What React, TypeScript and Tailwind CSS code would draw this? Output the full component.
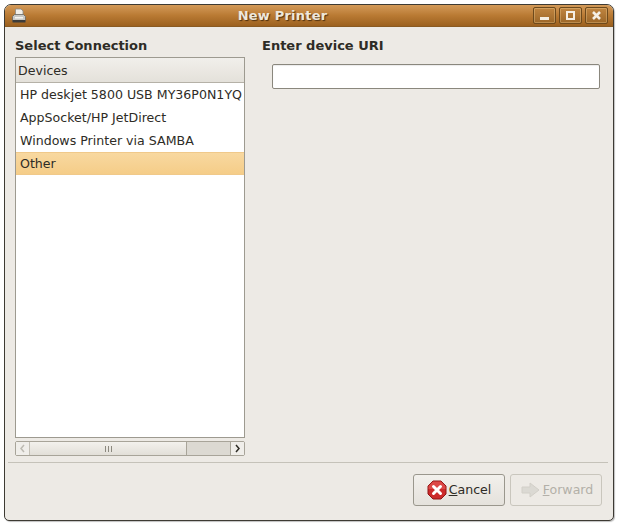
import React from "react";

const devices = ["HP deskjet 5800 USB MY36P0N1YQ", "AppSocket/HP JetDirect", "Windows Printer via SAMBA"];

function WinButton({ children }: { children: React.ReactNode }) {
  return (
    <div className="w-[23px] h-[17px] flex items-center justify-center rounded-[2px] border border-[#6e4a1c] bg-gradient-to-b from-[#c08540] to-[#9c6728] shadow-[inset_0_0_0_1px_rgba(255,225,170,0.3)]">
      {children}
    </div>
  );
}

function PrinterIcon() {
  return (
    <svg width="16" height="16" viewBox="0 0 16 16">
      <path d="M4.500 1h5.500l2 2v5h-7.500z" fill="#f2f0ea" stroke="#8a8a86" strokeWidth="0.8" />
      <path d="M1.500 8.500l2-2h9l2 2v4h-13z" fill="#c9c9c5" stroke="#66655f" strokeWidth="0.8" />
      <rect x="1.500" y="12" width="13" height="2.500" rx="0.500" fill="#3c3c3a" />
      <rect x="4" y="9" width="8" height="1.500" fill="#f4f4f0" />
    </svg>
  );
}

function CancelIcon() {
  return (
    <svg width="20" height="20" viewBox="0 0 20 20">
      <path d="M6 1h8l5 5v8l-5 5H6l-5-5V6z" fill="#cc2a2a" stroke="#8f1414" strokeWidth="1" />
      <path d="M6 1.500h8l4.500 4.500v3H1.500V6z" fill="#e9615c" opacity="0.55" />
      <path d="M6.500 6.500l7 7M13.500 6.500l-7 7" stroke="#fff" strokeWidth="3" strokeLinecap="round" />
    </svg>
  );
}

function ForwardIcon() {
  return (
    <svg width="19" height="16" viewBox="0 0 19 16">
      <path d="M1 5h8V1l9 7-9 7v-4H1z" fill="#dbd9d3" stroke="#d2cfc8" strokeWidth="1" />
    </svg>
  );
}

export default function App() {
  return (
    <div
      className="w-[618px] h-[525px] bg-white pt-1 pl-1 pr-[4px] pb-[4px] text-[12.6px] text-[#2e2c26]"
      style={{ fontFamily: '"DejaVu Sans", sans-serif' }}
    >
      <div className="h-full flex flex-col border border-[#3d3a33] rounded-t-[7px] rounded-b-[5px] overflow-hidden bg-[#edeae5] shadow-[1px_1px_1px_rgba(0,0,0,0.25)]">
        {/* Title bar */}
        <div className="h-[22px] shrink-0 flex items-center pl-[6px] pr-[5px] bg-gradient-to-b from-[#d39a58] via-[#b97a33] to-[#9c611f] border-b border-[#8a5a22]">
          <PrinterIcon />
          <div className="flex-1 pl-[5px] text-center text-[13px] font-bold tracking-[0.2px] text-[#eee8dc] [text-shadow:1px_1px_1px_#4d3010]">
            New Printer
          </div>
          <div className="flex gap-[3px]">
            <WinButton>
              <div className="w-[9px] h-[3px] mt-[6px] bg-[#f5efe4]" />
            </WinButton>
            <WinButton>
              <div className="w-[9px] h-[9px] border-2 border-[#f5efe4]" />
            </WinButton>
            <WinButton>
              <svg width="11" height="11" viewBox="0 0 11 11">
                <path d="M2 2l7 7M9 2l-7 7" stroke="#f5efe4" strokeWidth="2.600" />
              </svg>
            </WinButton>
          </div>
        </div>

        {/* Body */}
        <div className="flex-1 min-h-0 flex pl-[10px] pt-[10px]">
          <div className="w-[230px] flex flex-col">
            <div className="h-[20px] pt-px text-[13px] font-bold leading-[16px]">Select Connection</div>
            <div className="h-[381px] border border-[#9d9a90] bg-white overflow-hidden">
              <div className="h-[25px] flex items-center pl-[2px] pt-[2px] bg-gradient-to-b from-[#f1efeb] to-[#e4e1da] border-b border-[#b5b1a7]">
                Devices
              </div>
              {devices.map((d) => (
                <div key={d} className="h-[23px] flex items-center pl-[4px] pt-[2px] whitespace-nowrap overflow-hidden">
                  {d}
                </div>
              ))}
              <div className="h-[23px] flex items-center pl-[4px] pt-px bg-gradient-to-b from-[#f8d8a0] to-[#f5cd88] border-y border-[#f0c98a]">
                Other
              </div>
            </div>
            {/* Scrollbar */}
            <div className="mt-[3px] h-[15px] flex border border-[#a8a499] rounded-[2px] bg-[#dcd9d2]">
              <div className="w-[14px] flex items-center justify-center border-r border-[#c4c0b6] bg-[#f0eeea]">
                <svg width="7" height="9" viewBox="0 0 7 9">
                  <path d="M5 1L2 4.500 5 8" fill="none" stroke="#bdbab2" strokeWidth="1.500" />
                </svg>
              </div>
              <div className="w-[157px] flex items-center justify-center gap-[2px] border-r border-[#a8a499] bg-gradient-to-b from-[#f3f1ed] to-[#e2dfd8]">
                <div className="w-px h-[6px] bg-[#8c897f]" />
                <div className="w-px h-[6px] bg-[#8c897f]" />
                <div className="w-px h-[6px] bg-[#8c897f]" />
              </div>
              <div className="flex-1" />
              <div className="w-[14px] flex items-center justify-center border-l border-[#a8a499] bg-[#f0eeea]">
                <svg width="7" height="9" viewBox="0 0 7 9">
                  <path d="M2 1l3 3.500L2 8" fill="none" stroke="#2e2c26" strokeWidth="1.500" />
                </svg>
              </div>
            </div>
          </div>
          <div className="flex-1 pl-[17px]">
            <div className="h-[20px] pt-px text-[13px] font-bold leading-[16px]">Enter device URI</div>
            <div className="ml-[10px] mr-[13px] mt-[7px] h-[25px] bg-white border border-[#8a877d] rounded-[2px] shadow-[inset_0_1px_1px_rgba(0,0,0,0.08)]" />
          </div>
        </div>

        {/* Footer */}
        <div className="shrink-0 ml-[3px] mr-[5px] h-px bg-[#c5c2b9]" />
        <div className="shrink-0 h-[57px] flex justify-end gap-[5px] pt-[11px] pr-[11px]">
          <div className="w-[92px] h-[32px] flex items-center justify-center gap-[2px] border border-[#9a978d] rounded-[3px] bg-gradient-to-b from-[#f2f0ec] to-[#e5e2dc]">
            <CancelIcon />
            <span>
              <span className="underline">C</span>ancel
            </span>
          </div>
          <div className="w-[92px] h-[32px] flex items-center justify-center gap-[3px] pl-[2px] border border-[#c9c6bd] rounded-[3px] text-[#b3b0a8]">
            <ForwardIcon />
            <span>
              <span className="underline">F</span>orward
            </span>
          </div>
        </div>
      </div>
    </div>
  );
}
